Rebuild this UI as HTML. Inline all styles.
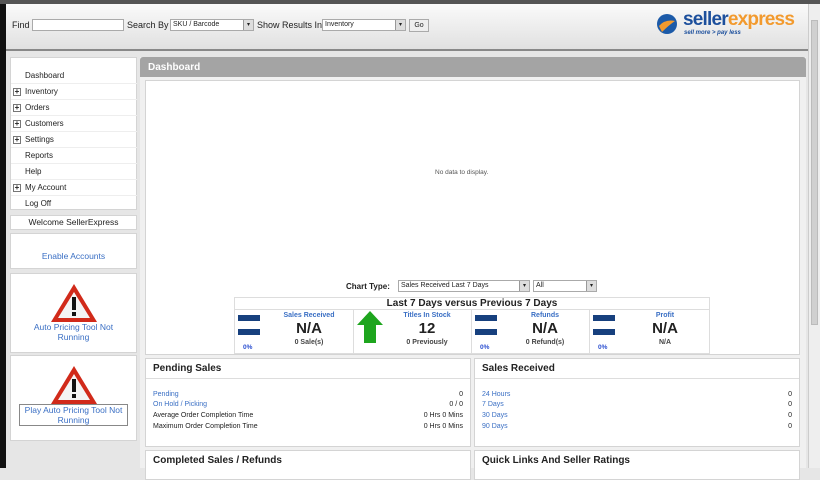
<!DOCTYPE html>
<html><head><style>
*{margin:0;padding:0;box-sizing:border-box}
body{width:820px;height:468px;overflow:hidden;background:#e6e6e6;font-family:"Liberation Sans",sans-serif;font-size:8px;color:#222;position:relative}
.a{position:absolute}
.p{position:absolute;background:#fff;border:1px solid #d4d4d4}
.sel{position:absolute;background:#fff;border:1px solid #aaa;height:12px;font-size:7px;line-height:10px;padding-left:2px}
.dd{position:absolute;right:0;top:0;width:10px;height:10px;background:#ddd;border-left:1px solid #999;font-size:6px;text-align:center;line-height:10px}
.mi{position:absolute;left:0;width:126px;height:16px;border-bottom:1px solid #eee;font-size:8px;line-height:16px;padding-left:14px}
.pl{position:absolute;left:2px;top:4px;width:8px;height:8px;border:1px solid #777;font-size:8px;line-height:6px;text-align:center;font-weight:bold}
.lnk{color:#3a6fc4}
.bar{position:absolute;width:22px;height:6px;background:#17407e}
.row{position:absolute;left:7px;right:7px;height:10px;font-size:7px;line-height:10px}
.row span{position:absolute;right:0}
</style></head><body>
<div class="a" style="left:0;top:0;width:820px;height:4px;background:#555"></div>
<div class="a" style="left:0;top:4px;width:808px;height:46px;background:linear-gradient(#fafafa,#e0e0e0)"></div>
<div class="a" style="left:0;top:49px;width:808px;height:2px;background:#888"></div>
<div class="a" style="left:12px;top:20px;font-size:9px">Find</div>
<div class="sel" style="left:32px;top:19px;width:92px"></div>
<div class="a" style="left:127px;top:20px;font-size:9px">Search By</div>
<div class="sel" style="left:170px;top:19px;width:84px">SKU / Barcode<div class="dd">▾</div></div>
<div class="a" style="left:257px;top:20px;font-size:9px">Show Results In</div>
<div class="sel" style="left:322px;top:19px;width:84px">Inventory<div class="dd">▾</div></div>
<div class="a" style="left:409px;top:19px;width:20px;height:13px;border:1px solid #aaa;background:#eee;font-size:7px;text-align:center;line-height:11px">Go</div>
<svg class="a" style="left:656px;top:13px" width="22" height="22"><circle cx="11" cy="11" r="10" fill="#1c5aa8"/><path d="M3 13 Q9 6 19 8 Q13 12 6 19 Z" fill="#f29a2e"/></svg>
<div class="a" style="left:683px;top:9px;font-size:19px;font-weight:bold;letter-spacing:-0.8px"><span style="color:#1c4f9c">seller</span><span style="color:#f29a2e">express</span></div>
<div class="a" style="left:684px;top:30px;font-size:6px;font-style:italic;color:#1c4f9c;font-weight:bold">sell more &gt; pay less</div>
<div class="a" style="left:808px;top:4px;width:12px;height:464px;background:#eee;border-left:1px solid #ccc"></div>
<div class="a" style="left:811px;top:20px;width:7px;height:305px;background:#d0d0d0;border:1px solid #bbb"></div>
<div class="a" style="left:0;top:4px;width:6px;height:464px;background:#111"></div>

<div class="p" style="left:10px;top:57px;width:127px;height:153px">
<div class="mi" style="top:10px">Dashboard</div>
<div class="mi" style="top:26px"><div class="pl">+</div>Inventory</div>
<div class="mi" style="top:42px"><div class="pl">+</div>Orders</div>
<div class="mi" style="top:58px"><div class="pl">+</div>Customers</div>
<div class="mi" style="top:74px"><div class="pl">+</div>Settings</div>
<div class="mi" style="top:90px">Reports</div>
<div class="mi" style="top:106px">Help</div>
<div class="mi" style="top:122px"><div class="pl">+</div>My Account</div>
<div class="mi" style="top:138px;border:0">Log Off</div>
</div>
<div class="p" style="left:10px;top:215px;width:127px;height:15px;text-align:center;font-size:8.5px;line-height:13px">Welcome SellerExpress</div>
<div class="p" style="left:10px;top:233px;width:127px;height:36px;text-align:center;font-size:8.5px;line-height:44px"><span class="lnk">Enable Accounts</span></div>
<div class="p" style="left:10px;top:273px;width:127px;height:80px;text-align:center;font-size:8.5px">
<svg style="margin-top:8px" width="50" height="42"><path d="M25 2 L48 40 L2 40 Z" fill="#d12a1a"/><path d="M25 10 L41 36 L9 36 Z" fill="#f4f4f4"/><rect x="23" y="15" width="4" height="13" fill="#111"/><rect x="23" y="30" width="4" height="4" fill="#111"/></svg>
<div class="lnk" style="margin-top:-4px;line-height:10px">Auto Pricing Tool Not<br>Running</div></div>
<div class="p" style="left:10px;top:355px;width:127px;height:86px;text-align:center;font-size:8.5px">
<svg style="margin-top:8px" width="50" height="42"><path d="M25 2 L48 40 L2 40 Z" fill="#d12a1a"/><path d="M25 10 L41 36 L9 36 Z" fill="#f4f4f4"/><rect x="23" y="15" width="4" height="13" fill="#111"/><rect x="23" y="30" width="4" height="4" fill="#111"/></svg>
<div class="lnk" style="margin:-4px 8px 0;border:1px solid #888;line-height:10px">Play Auto Pricing Tool Not<br>Running</div></div>

<div class="a" style="left:140px;top:57px;width:666px;height:411px;background:#f0f0f0"></div>
<div class="a" style="left:140px;top:57px;width:666px;height:20px;background:#a4a4a4;border-radius:3px 3px 0 0;color:#fff;font-weight:bold;font-size:10px;line-height:21px;padding-left:8px">Dashboard</div>
<div class="p" style="left:145px;top:80px;width:655px;height:275px"></div>
<div class="a" style="left:435px;top:169px;font-size:6.5px;color:#555">No data to display.</div>
<div class="a" style="left:346px;top:282px;font-size:8px;font-weight:bold">Chart Type:</div>
<div class="sel" style="left:398px;top:280px;width:132px">Sales Received Last 7 Days<div class="dd">▾</div></div>
<div class="sel" style="left:533px;top:280px;width:64px">All<div class="dd">▾</div></div>
<div class="a" style="left:234px;top:297px;width:476px;height:57px;border:1px solid #ddd;background:#fff">
<div style="height:12px;border-bottom:1px solid #ddd;text-align:center;font-weight:bold;font-size:10px;line-height:12px">Last 7 Days versus Previous 7 Days</div>
<div class="a" style="left:118px;top:12px;width:1px;height:44px;background:#ddd"></div>
<div class="a" style="left:236px;top:12px;width:1px;height:44px;background:#ddd"></div>
<div class="a" style="left:354px;top:12px;width:1px;height:44px;background:#ddd"></div>
<div class="bar" style="left:3px;top:17px"></div><div class="bar" style="left:3px;top:31px"></div>
<div class="bar" style="left:240px;top:17px"></div><div class="bar" style="left:240px;top:31px"></div>
<div class="bar" style="left:358px;top:17px"></div><div class="bar" style="left:358px;top:31px"></div>
<svg class="a" style="left:122px;top:13px" width="26" height="32"><path d="M13 0 L26 14 L19 14 L19 32 L7 32 L7 14 L0 14 Z" fill="#1ea51e"/></svg>
<div class="a lnk" style="left:8px;top:46px;font-size:6.5px;font-weight:bold;color:#2a4ed0">0%</div>
<div class="a lnk" style="left:245px;top:46px;font-size:6.5px;font-weight:bold;color:#2a4ed0">0%</div>
<div class="a lnk" style="left:363px;top:46px;font-size:6.5px;font-weight:bold;color:#2a4ed0">0%</div>
<div class="a" style="left:30px;top:14px;width:88px;text-align:center"><div class="lnk" style="font-size:7px;font-weight:bold">Sales Received</div><div style="font-size:15px;font-weight:bold;line-height:20px">N/A</div><div style="font-size:7px;font-weight:bold;color:#444">0 Sale(s)</div></div>
<div class="a" style="left:148px;top:14px;width:88px;text-align:center"><div class="lnk" style="font-size:7px;font-weight:bold">Titles In Stock</div><div style="font-size:15px;font-weight:bold;line-height:20px">12</div><div style="font-size:7px;font-weight:bold;color:#444">0 Previously</div></div>
<div class="a" style="left:266px;top:14px;width:88px;text-align:center"><div class="lnk" style="font-size:7px;font-weight:bold">Refunds</div><div style="font-size:15px;font-weight:bold;line-height:20px">N/A</div><div style="font-size:7px;font-weight:bold;color:#444">0 Refund(s)</div></div>
<div class="a" style="left:384px;top:14px;width:92px;text-align:center"><div class="lnk" style="font-size:7px;font-weight:bold">Profit</div><div style="font-size:15px;font-weight:bold;line-height:20px">N/A</div><div style="font-size:7px;font-weight:bold;color:#444">N/A</div></div>
</div>

<div class="p" style="left:145px;top:358px;width:326px;height:89px">
<div style="height:20px;border-bottom:1px solid #ddd;font-size:10px;font-weight:bold;line-height:20px;padding-left:7px">Pending Sales</div>
<div class="row lnk" style="top:31px">Pending<span style="color:#222">0</span></div>
<div class="row lnk" style="top:41px">On Hold / Picking<span style="color:#222">0 / 0</span></div>
<div class="row" style="top:52px">Average Order Completion Time<span>0 Hrs 0 Mins</span></div>
<div class="row" style="top:63px">Maximum Order Completion Time<span>0 Hrs 0 Mins</span></div>
</div>
<div class="p" style="left:474px;top:358px;width:326px;height:89px">
<div style="height:20px;border-bottom:1px solid #ddd;font-size:10px;font-weight:bold;line-height:20px;padding-left:7px">Sales Received</div>
<div class="row lnk" style="top:31px">24 Hours<span style="color:#222">0</span></div>
<div class="row lnk" style="top:41px">7 Days<span style="color:#222">0</span></div>
<div class="row lnk" style="top:52px">30 Days<span style="color:#222">0</span></div>
<div class="row lnk" style="top:63px">90 Days<span style="color:#222">0</span></div>
</div>
<div class="p" style="left:145px;top:450px;width:326px;height:30px;font-size:10px;font-weight:bold;padding:4px 7px">Completed Sales / Refunds</div>
<div class="p" style="left:474px;top:450px;width:326px;height:30px;font-size:10px;font-weight:bold;padding:4px 7px">Quick Links And Seller Ratings</div>
</body></html>
